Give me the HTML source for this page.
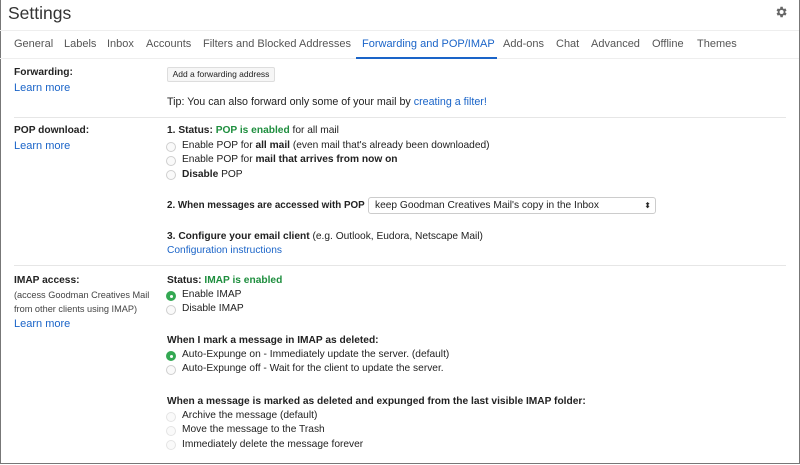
<!DOCTYPE html>
<html><head><style>
body{margin:0;width:800px;height:465px;overflow:hidden;background:#fff;font-family:"Liberation Sans",Arial,sans-serif;color:#222;font-size:10.2px}
.frame{position:absolute;left:0;top:0;width:798px;height:463px;border:1px solid #777;border-top:none}
.a{position:absolute;white-space:nowrap}
.blue{color:#1a64c8}.green{color:#1e8e3e;font-weight:bold}
b{font-weight:bold}
.hr{position:absolute;left:14px;right:14px;height:1px;background:#e6e6e6}
.r{position:absolute;width:10px;height:10px;border-radius:50%;border:1px solid #cfcfcf;box-sizing:border-box;background:#fafafa}
.r.on{background:#34a853;border-color:#34a853}
.r.on:after{content:"";position:absolute;left:2.5px;top:2.5px;width:3px;height:3px;border-radius:50%;background:#fff}
.tab{position:absolute;top:38px;font-size:11px;color:#555}
</style></head><body>
<div class="frame"></div>
<div class="a" style="left:8px;top:3px;font-size:17.5px;color:#333">Settings</div>
<svg class="a" style="left:774px;top:5px" width="14" height="14" viewBox="0 0 24 24"><path fill="#666" d="M19.4 13c.04-.33.06-.66.06-1s-.02-.67-.06-1l2.1-1.65-2-3.46-2.5 1a7.3 7.3 0 0 0-1.7-1L15 3h-4l-.4 2.9a7.3 7.3 0 0 0-1.700 1l-2.5-1-2 3.46L6.5 11c-.04.33-.06.66-.06 1s.02.67.06 1l-2.1 1.65 2 3.46 2.5-1c.52.4 1.1.74 1.7 1L11 21h4l.4-2.9c.6-.26 1.18-.6 1.7-1l2.5 1 2-3.46zM13 15.5a3.5 3.5 0 1 1 0-7 3.5 3.5 0 0 1 0 7z"/></svg>
<div class="a" style="left:0;top:30px;width:799px;height:1px;background:#eee"></div>
<div class="tab" style="left:14px">General</div>
<div class="tab" style="left:64px">Labels</div>
<div class="tab" style="left:107px">Inbox</div>
<div class="tab" style="left:146px">Accounts</div>
<div class="tab" style="left:203px">Filters and Blocked Addresses</div>
<div class="tab" style="left:362px;color:#1a64c8">Forwarding and POP/IMAP</div>
<div class="tab" style="left:503px">Add-ons</div>
<div class="tab" style="left:556px">Chat</div>
<div class="tab" style="left:591px">Advanced</div>
<div class="tab" style="left:652px">Offline</div>
<div class="tab" style="left:697px">Themes</div>
<div class="a" style="left:0;top:58px;width:799px;height:1px;background:#eee"></div>
<div class="a" style="left:356px;top:57px;width:141px;height:2px;background:#1a64c8"></div>

<div class="a" style="left:14px;top:67px"><b>Forwarding:</b></div>
<div class="a blue" style="left:14px;top:82px;font-size:11px">Learn more</div>
<div class="a" style="left:167px;top:67px;width:106px;height:13px;border:1px solid #ddd;border-radius:2px;background:#f6f6f6;font-size:8.5px;text-align:center;line-height:13px">Add a forwarding address</div>
<div class="a" style="left:167px;top:96px;font-size:10.7px">Tip: You can also forward only some of your mail by <span class="blue">creating a filter!</span></div>
<div class="hr" style="top:117px"></div>

<div class="a" style="left:14px;top:125px"><b>POP download:</b></div>
<div class="a blue" style="left:14px;top:140px;font-size:11px">Learn more</div>
<div class="a" style="left:167px;top:125px"><b>1. Status: </b><span class="green">POP is enabled</span> for all mail</div>
<div class="r" style="left:166px;top:142px"></div><div class="a" style="left:182px;top:140px">Enable POP for <b>all mail</b> (even mail that's already been downloaded)</div>
<div class="r" style="left:166px;top:156px"></div><div class="a" style="left:182px;top:154px">Enable POP for <b>mail that arrives from now on</b></div>
<div class="r" style="left:166px;top:170px"></div><div class="a" style="left:182px;top:169px"><b>Disable</b> POP</div>
<div class="a" style="left:167px;top:200px;font-size:9.8px"><b>2. When messages are accessed with POP</b></div>
<div class="a" style="left:368px;top:197px;width:288px;height:17px;border:1px solid #ccc;border-radius:3px;box-sizing:border-box;line-height:15px;padding-left:6px">keep Goodman Creatives Mail's copy in the Inbox<span style="position:absolute;right:4px;font-size:8px">&#x2B0D;</span></div>
<div class="a" style="left:167px;top:231px"><b>3. Configure your email client</b> (e.g. Outlook, Eudora, Netscape Mail)</div>
<div class="a blue" style="left:167px;top:245px">Configuration instructions</div>
<div class="hr" style="top:265px"></div>

<div class="a" style="left:14px;top:275px"><b>IMAP access:</b></div>
<div class="a" style="left:14px;top:290px;font-size:9.2px;color:#444">(access Goodman Creatives Mail</div>
<div class="a" style="left:14px;top:304px;font-size:9.2px;color:#444">from other clients using IMAP)</div>
<div class="a blue" style="left:14px;top:318px;font-size:11px">Learn more</div>
<div class="a" style="left:167px;top:275px"><b>Status: </b><span class="green">IMAP is enabled</span></div>
<div class="r on" style="left:166px;top:291px"></div><div class="a" style="left:182px;top:289px">Enable IMAP</div>
<div class="r" style="left:166px;top:305px"></div><div class="a" style="left:182px;top:303px">Disable IMAP</div>
<div class="a" style="left:167px;top:335px"><b>When I mark a message in IMAP as deleted:</b></div>
<div class="r on" style="left:166px;top:351px"></div><div class="a" style="left:182px;top:349px">Auto-Expunge on - Immediately update the server. (default)</div>
<div class="r" style="left:166px;top:365px"></div><div class="a" style="left:182px;top:363px">Auto-Expunge off - Wait for the client to update the server.</div>
<div class="a" style="left:167px;top:396px"><b>When a message is marked as deleted and expunged from the last visible IMAP folder:</b></div>
<div class="r" style="left:166px;top:412px;border-color:#e4e4e4"></div><div class="a" style="left:182px;top:410px">Archive the message (default)</div>
<div class="r" style="left:166px;top:426px;border-color:#e4e4e4"></div><div class="a" style="left:182px;top:424px">Move the message to the Trash</div>
<div class="r" style="left:166px;top:440px;border-color:#e4e4e4"></div><div class="a" style="left:182px;top:439px">Immediately delete the message forever</div>
</body></html>
